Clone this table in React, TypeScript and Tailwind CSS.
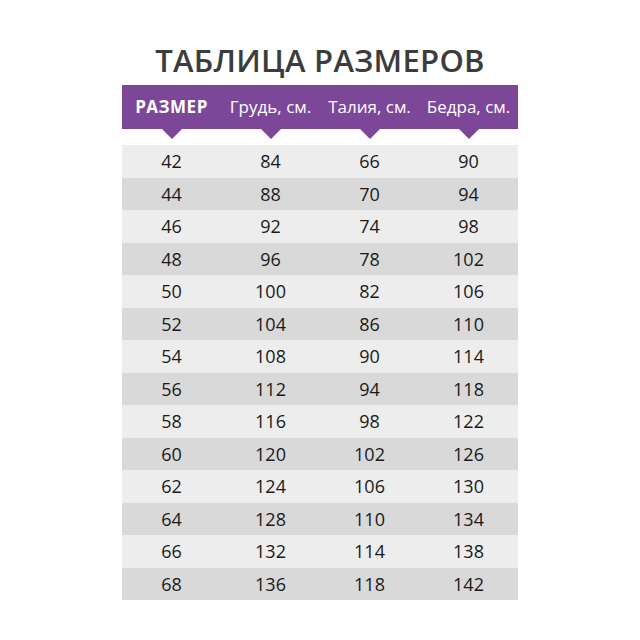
import React from 'react';

const ROWS: number[][] = [
  [42, 84, 66, 90],
  [44, 88, 70, 94],
  [46, 92, 74, 98],
  [48, 96, 78, 102],
  [50, 100, 82, 106],
  [52, 104, 86, 110],
  [54, 108, 90, 114],
  [56, 112, 94, 118],
  [58, 116, 98, 122],
  [60, 120, 102, 126],
  [62, 124, 106, 130],
  [64, 128, 110, 134],
  [66, 132, 114, 138],
  [68, 136, 118, 142],
];

const HEADERS = ['РАЗМЕР', 'Грудь, см.', 'Талия, см.', 'Бедра, см.'];

export default function App() {
  return (
    <div
      className="w-[640px] h-[640px] bg-white flex flex-col items-center"
      style={{ fontFamily: '"Open Sans", "Liberation Sans", sans-serif' }}
    >
      <h1 className="mt-[36px] h-[49px] text-[31px] leading-[49px] font-semibold tracking-[0.3px] text-[#3c3c3c]">
        ТАБЛИЦА РАЗМЕРОВ
      </h1>
      <div className="w-[396px]">
        <div className="grid grid-cols-4 h-[44px] bg-[#7c4799] text-white">
          {HEADERS.map((h, i) => (
            <div key={i} className="relative flex items-center justify-center">
              <span className={i === 0 ? 'text-[17px] font-bold tracking-[0.5px]' : 'text-[17px]'}>{h}</span>
              <div className="absolute left-1/2 top-full -translate-x-1/2 w-0 h-0 border-l-[10px] border-r-[10px] border-t-[10px] border-l-transparent border-r-transparent border-t-[#7c4799]" />
            </div>
          ))}
        </div>
        <div className="mt-[16px]">
          {ROWS.map((row, r) => (
            <div
              key={r}
              className={`grid grid-cols-4 h-[32.5px] items-center text-[18px] font-medium text-[#1a1a1a] ${
                r % 2 === 0 ? 'bg-[#ededed]' : 'bg-[#d9d9d9]'
              }`}
            >
              {row.map((v, c) => (
                <div key={c} className="text-center leading-none">
                  {v}
                </div>
              ))}
            </div>
          ))}
        </div>
      </div>
    </div>
  );
}
